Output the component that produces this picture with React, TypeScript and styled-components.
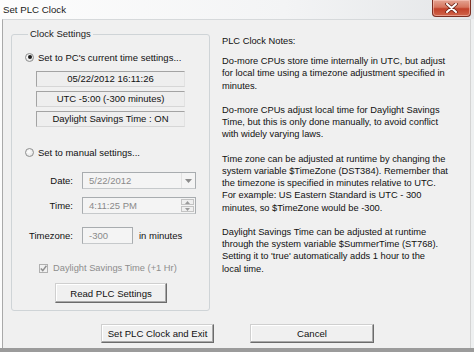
import styled, { createGlobalStyle } from 'styled-components'

const GlobalStyle = createGlobalStyle`
  html, body {
    margin: 0;
    padding: 0;
    background: #f4f5f6;
  }
  body {
    font-family: "Liberation Sans", Arial, sans-serif;
    color: #111;
  }
`

const notes: string[][] = [
  [
    'Do-more CPUs store time internally in UTC, but adjust',
    'for local time using a timezone adjustment specified in',
    'minutes.',
  ],
  [
    'Do-more CPUs adjust local time for Daylight Savings',
    'Time, but this is only done manually, to avoid conflict',
    'with widely varying laws.',
  ],
  [
    'Time zone can be adjusted at runtime by changing the',
    'system variable $TimeZone (DST384). Remember that',
    'the timezone is specified in minutes relative to UTC.',
    'For example: US Eastern Standard  is UTC - 300',
    'minutes, so $TimeZone would be -300.',
  ],
  [
    'Daylight Savings Time can be adjusted at runtime',
    'through the system variable $SummerTime (ST768).',
    "Setting it to 'true' automatically adds 1 hour to the",
    'local time.',
  ],
]

const App = () => {
  return (
    <>
      <GlobalStyle />
      <Window>
        <TitleBar>
          <Title>Set PLC Clock</Title>
          <CloseButton>
            <svg width="13" height="10" viewBox="0 0 13 10">
              <path d="M2 1 L11 9 M11 1 L2 9" stroke="#6b2418" strokeWidth="3.6" strokeLinecap="round" />
              <path d="M2 1 L11 9 M11 1 L2 9" stroke="#ffffff" strokeWidth="2" strokeLinecap="round" />
            </svg>
          </CloseButton>
        </TitleBar>
        <Client>
          <TopArea>
            <GroupBox>
              <Legend>Clock Settings</Legend>
              <RadioRow>
                <Radio $checked />
                <span>Set to PC's current time settings...</span>
              </RadioRow>
              <StaticBox $first>05/22/2012 16:11:26</StaticBox>
              <StaticBox>UTC -5:00 (-300 minutes)</StaticBox>
              <StaticBox>Daylight Savings Time : ON</StaticBox>
              <RadioRow $gap={19}>
                <Radio />
                <span>Set to manual settings...</span>
              </RadioRow>
              <FieldRow $gap={14}>
                <FieldLabel>Date:</FieldLabel>
                <DisabledInput $width={114}>
                  <InputText>5/22/2012</InputText>
                  <DropButton>
                    <svg width="7" height="4" viewBox="0 0 7 4">
                      <path d="M0 0 L7 0 L3.5 4 Z" fill="#8c8c8c" />
                    </svg>
                  </DropButton>
                </DisabledInput>
              </FieldRow>
              <FieldRow $gap={8}>
                <FieldLabel>Time:</FieldLabel>
                <DisabledInput $width={114}>
                  <InputText>4:11:25 PM</InputText>
                  <Spinner>
                    <SpinButton>
                      <svg width="5" height="3" viewBox="0 0 5 3">
                        <path d="M0 3 L5 3 L2.5 0 Z" fill="#9a9a9a" />
                      </svg>
                    </SpinButton>
                    <SpinButton>
                      <svg width="5" height="3" viewBox="0 0 5 3">
                        <path d="M0 0 L5 0 L2.5 3 Z" fill="#9a9a9a" />
                      </svg>
                    </SpinButton>
                  </Spinner>
                </DisabledInput>
              </FieldRow>
              <FieldRow $gap={13}>
                <FieldLabel>Timezone:</FieldLabel>
                <DisabledInput $width={51}>
                  <InputText>-300</InputText>
                </DisabledInput>
                <Units>in minutes</Units>
              </FieldRow>
              <CheckRow>
                <CheckBox>
                  <svg width="7" height="7" viewBox="0 0 7 7">
                    <path d="M0.8 3.4 L2.8 5.6 L6.4 0.8" stroke="#8f8f8f" strokeWidth="1.5" fill="none" />
                  </svg>
                </CheckBox>
                <span>Daylight Savings Time (+1 Hr)</span>
              </CheckRow>
              <ReadButton>Read PLC Settings</ReadButton>
            </GroupBox>
            <Notes>
              <NotesTitle>PLC Clock Notes:</NotesTitle>
              {notes.map((para, i) => (
                <Paragraph key={i}>
                  {para.map((line, j) => (
                    <Line key={j}>{line}</Line>
                  ))}
                </Paragraph>
              ))}
            </Notes>
          </TopArea>
          <ButtonRow>
            <DialogButton $width={113}>Set PLC Clock and Exit</DialogButton>
            <DialogButton $width={124}>Cancel</DialogButton>
          </ButtonRow>
        </Client>
      </Window>
    </>
  )
}

export default App

const Window = styled.div`
  box-sizing: border-box;
  width: 474px;
  height: 352px;
  display: flex;
  flex-direction: column;
  background: linear-gradient(to right, #fcfcfc, #eef0f1);
  border-bottom: 4px solid #9b9b9b;
  overflow: hidden;
`

const TitleBar = styled.div`
  height: 19px;
  display: flex;
  align-items: flex-start;
  background: linear-gradient(to right, #fdfdfd 0%, #f3f4f5 60%, #e4e6e8 100%);
`

const Title = styled.div`
  margin: 4px 0 0 3px;
  font-size: 9.7px;
  line-height: 12px;
  color: #1a1a1a;
`

const CloseButton = styled.div`
  box-sizing: border-box;
  margin-left: auto;
  margin-right: 3px;
  width: 39px;
  height: 17px;
  display: flex;
  align-items: center;
  justify-content: center;
  border: 1px solid #7c2e22;
  border-top: none;
  border-radius: 0 0 4px 4px;
  background: linear-gradient(to bottom, #e4a493 0%, #d6755e 45%, #c2412a 55%, #d0654a 100%);
  box-shadow: inset 0 0 0 1px rgba(255, 210, 200, 0.5);
`

const Client = styled.div`
  flex: 1;
  display: flex;
  flex-direction: column;
  margin: 0 3px 0 2px;
  padding: 8px 0 0 8px;
  background: #f0f0f0;
  border: 1px solid #a9a9a9;
  border-top-color: #d6d9db;
  border-right-color: #d4d4d4;
  border-bottom: none;
`

const TopArea = styled.div`
  display: flex;
  align-items: flex-start;
`

const GroupBox = styled.fieldset`
  box-sizing: border-box;
  width: 199px;
  margin: 0;
  padding: 0 0 7px 13px;
  border: 1px solid #cfd4d7;
  border-radius: 3px;
  display: flex;
  flex-direction: column;
  align-items: flex-start;
  font-size: 9.5px;
  color: #111;
`

const Legend = styled.legend`
  margin-left: 3px;
  padding: 0 2px;
  font-size: 9.5px;
  line-height: 12px;
  color: #1a1a1a;
`

const RadioRow = styled.div<{ $gap?: number }>`
  display: flex;
  align-items: center;
  gap: 4px;
  height: 12px;
  margin-top: ${p => p.$gap ?? 11}px;
  font-size: 9.5px;
`

const Radio = styled.span<{ $checked?: boolean }>`
  position: relative;
  box-sizing: border-box;
  width: 9px;
  height: 9px;
  border-radius: 50%;
  border: 1px solid #8e8f8f;
  background: radial-gradient(circle at 40% 40%, #ffffff, #dcdcdc);

  &::after {
    content: '';
    display: ${p => (p.$checked ? 'block' : 'none')};
    position: absolute;
    left: 1.5px;
    top: 1.5px;
    width: 4px;
    height: 4px;
    border-radius: 50%;
    background: #1c1c1c;
  }
`

const StaticBox = styled.div<{ $first?: boolean }>`
  box-sizing: border-box;
  width: 149px;
  height: 16px;
  margin: ${p => (p.$first ? 8 : 4)}px 0 0 11px;
  border: 1px solid;
  border-color: #a3a3a3 #e2e2e2 #d6d6d6 #a3a3a3;
  background: #eeeeee;
  text-align: center;
  line-height: 14px;
  font-size: 9.5px;
  color: #111;
`

const FieldRow = styled.div<{ $gap: number }>`
  display: flex;
  align-items: center;
  margin-top: ${p => p.$gap}px;
`

const FieldLabel = styled.span`
  width: 48px;
  margin-right: 9px;
  text-align: right;
  font-size: 9.5px;
  color: #111;
`

const DisabledInput = styled.div<{ $width: number }>`
  box-sizing: border-box;
  width: ${p => p.$width}px;
  height: 17px;
  display: flex;
  align-items: stretch;
  border: 1px solid #a8acaf;
  border-bottom-color: #c6c9cb;
  background: #f4f4f4;
`

const InputText = styled.span`
  flex: 1;
  padding-left: 6px;
  line-height: 15px;
  font-size: 9.5px;
  color: #8a8a8a;
`

const DropButton = styled.span`
  width: 13px;
  display: flex;
  align-items: center;
  justify-content: center;
  border-left: 1px solid #e2e2e2;
`

const Spinner = styled.span`
  width: 13px;
  display: flex;
  flex-direction: column;
  gap: 1px;
  padding: 1px 1px 1px 0;
`

const SpinButton = styled.span`
  flex: 1;
  display: flex;
  align-items: center;
  justify-content: center;
  border: 1px solid #c3c3c3;
  background: #efefef;
`

const Units = styled.span`
  margin-left: 6px;
  font-size: 9.5px;
  color: #111;
`

const CheckRow = styled.div`
  display: flex;
  align-items: center;
  gap: 5px;
  height: 12px;
  margin: 18px 0 0 14px;
  font-size: 9.3px;
  color: #8d8d8d;
`

const CheckBox = styled.span`
  box-sizing: border-box;
  width: 9px;
  height: 9px;
  display: flex;
  align-items: center;
  justify-content: center;
  border: 1px solid #b0b0b0;
  background: #f1f1f1;
`

const buttonBase = `
  box-sizing: border-box;
  border: 1px solid;
  border-color: #cfcfcf #6b6b6b #6b6b6b #cfcfcf;
  box-shadow: inset -1px -1px 0 #a9a9a9, inset 1px 1px 0 #ffffff;
  background: #f0f0f0;
  font-family: "Liberation Sans", Arial, sans-serif;
  color: #111;
  padding: 0;
  text-align: center;
`

const ReadButton = styled.button`
  ${buttonBase}
  width: 112px;
  height: 20px;
  margin: 9px 0 0 30px;
  font-size: 9.6px;
`

const Notes = styled.div`
  margin: 7px 0 0 12px;
  font-size: 9.3px;
  line-height: 12.2px;
  color: #111;
  white-space: nowrap;
`

const NotesTitle = styled.div`
  margin-bottom: 8px;
`

const Paragraph = styled.div`
  margin-bottom: 12.2px;
`

const Line = styled.div``

const ButtonRow = styled.div`
  display: flex;
  gap: 36px;
  margin: 13px 0 0 90px;
`

const DialogButton = styled.button<{ $width: number }>`
  ${buttonBase}
  width: ${p => p.$width}px;
  height: 19px;
  font-size: 9.6px;
`
